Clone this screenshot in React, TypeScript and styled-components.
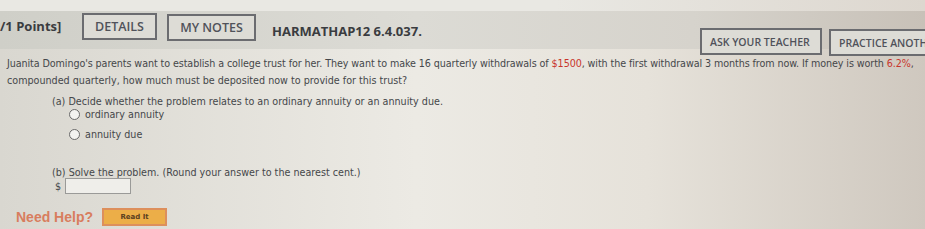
import React from "react";
import styled, { createGlobalStyle } from "styled-components";

const GlobalStyle = createGlobalStyle`
  html, body {
    margin: 0;
    padding: 0;
    width: 925px;
    height: 229px;
    overflow: hidden;
    background: #e2e0da;
  }
`;

const Page = styled.div`
  width: 925px;
  height: 229px;
  display: flex;
  flex-direction: column;
  background: linear-gradient(90deg, #d9d7d0 0%, #eceae4 45%, #e6e2da 70%, #cfc8bf 100%);
  overflow: hidden;
`;

const TopStrip = styled.div`
  height: 11px;
  flex-shrink: 0;
  background: linear-gradient(90deg, #e9e8e3 0%, #e9e8e3 60%, #ddd7cf 100%);
`;

const Header = styled.div`
  height: 38px;
  flex-shrink: 0;
  display: flex;
  align-items: flex-start;
  padding-top: 2px;
  box-sizing: border-box;
  background: linear-gradient(90deg, #cfcfc8 0%, #dcdbd5 45%, #d6d3cc 75%, #c8c1b8 100%);
  font-family: "Open Sans", "Liberation Sans", sans-serif;
  color: #3a3c40;
  position: relative;
  z-index: 1;
`;

const Points = styled.span`
  width: 82px;
  flex-shrink: 0;
  font-size: 13px;
  font-weight: 700;
  line-height: 27px;
`;

const HeadButton = styled.div<{ $w: number; $top?: number; $gap?: number; $small?: boolean }>`
  width: ${(p) => p.$w}px;
  height: 27px;
  flex-shrink: 0;
  box-sizing: border-box;
  border: 2px solid #6b6c70;
  background: #dddcd6;
  display: flex;
  align-items: center;
  justify-content: ${(p) => (p.$small ? "flex-start" : "center")};
  padding-left: ${(p) => (p.$small ? 8 : 0)}px;
  font-size: ${(p) => (p.$small ? 10.5 : 12.5)}px;
  font-weight: 600;
  color: #50525a;
  margin-top: ${(p) => p.$top ?? 0}px;
  margin-left: ${(p) => p.$gap ?? 0}px;
  white-space: nowrap;
  overflow: hidden;
`;

const Code = styled.span`
  width: 428px;
  flex-shrink: 0;
  margin-left: 16px;
  font-size: 13px;
  font-weight: 700;
  line-height: 18px;
  margin-top: 9px;
`;

const Body = styled.div`
  padding: 6px 0 0 7px;
  font-family: "DejaVu Sans", Verdana, sans-serif;
  font-size: 9.6px;
  color: #45474a;
`;

const Para = styled.p<{ $top?: number; $tight?: boolean }>`
  margin: ${(p) => p.$top ?? 0}px 0 0 0;
  line-height: 17px;
  white-space: nowrap;
  letter-spacing: ${(p) => (p.$tight ? "-0.09px" : "normal")};
`;

const Red = styled.span`
  color: #c8352c;
`;

const Part = styled.div`
  margin: 4px 0 0 45px;
`;

const Option = styled.label<{ $top?: number }>`
  display: flex;
  align-items: center;
  gap: 5px;
  margin: ${(p) => p.$top ?? 0}px 0 0 17px;
  height: 20px;
`;

const Radio = styled.span`
  width: 9px;
  height: 9px;
  border-radius: 50%;
  border: 1px solid #6a6a6a;
  background: #f3f3f0;
`;

const Answer = styled.div`
  display: flex;
  align-items: center;
  gap: 4px;
  margin: -3px 0 0 3px;
`;

const Input = styled.div`
  width: 64px;
  height: 14px;
  border: 1px solid #9a9a98;
  background: #efeeea;
`;

const Help = styled.div`
  display: flex;
  align-items: center;
  gap: 9px;
  margin: 14px 0 0 9px;
`;

const HelpText = styled.span`
  font-family: "Liberation Sans", Arial, sans-serif;
  font-weight: 700;
  font-size: 14px;
  line-height: 17px;
  color: #d87d5e;
`;

const ReadButton = styled.div`
  width: 65px;
  height: 18px;
  box-sizing: border-box;
  border: 2px solid #dd8f5c;
  background: #ecae48;
  display: flex;
  align-items: center;
  justify-content: center;
  font-size: 7px;
  font-weight: 700;
  color: #5a4020;
`;

export default function App() {
  return (
    <>
      <GlobalStyle />
      <Page>
        <TopStrip />
        <Header>
          <Points>/1 Points]</Points>
          <HeadButton $w={75}>DETAILS</HeadButton>
          <HeadButton $w={89} $gap={10} $top={1}>MY NOTES</HeadButton>
          <Code>HARMATHAP12 6.4.037.</Code>
          <HeadButton $w={122} $top={15} $small>ASK YOUR TEACHER</HeadButton>
          <HeadButton $w={110} $top={16} $gap={7} $small>PRACTICE ANOTHER</HeadButton>
        </Header>
        <Body>
          <Para $tight>
            Juanita Domingo's parents want to establish a college trust for her. They want to make 16 quarterly withdrawals of{" "}
            <Red>$1500</Red>, with the first withdrawal 3 months from now. If money is worth <Red>6.2%</Red>,
          </Para>
          <Para>compounded quarterly, how much must be deposited now to provide for this trust?</Para>
          <Part>
            <Para>(a) Decide whether the problem relates to an ordinary annuity or an annuity due.</Para>
            <Option $top={-6}>
              <Radio />
              ordinary annuity
            </Option>
            <Option>
              <Radio />
              annuity due
            </Option>
            <Para $top={20}>(b) Solve the problem. (Round your answer to the nearest cent.)</Para>
            <Answer>
              $<Input />
            </Answer>
          </Part>
          <Help>
            <HelpText>Need Help?</HelpText>
            <ReadButton>Read It</ReadButton>
          </Help>
        </Body>
      </Page>
    </>
  );
}
